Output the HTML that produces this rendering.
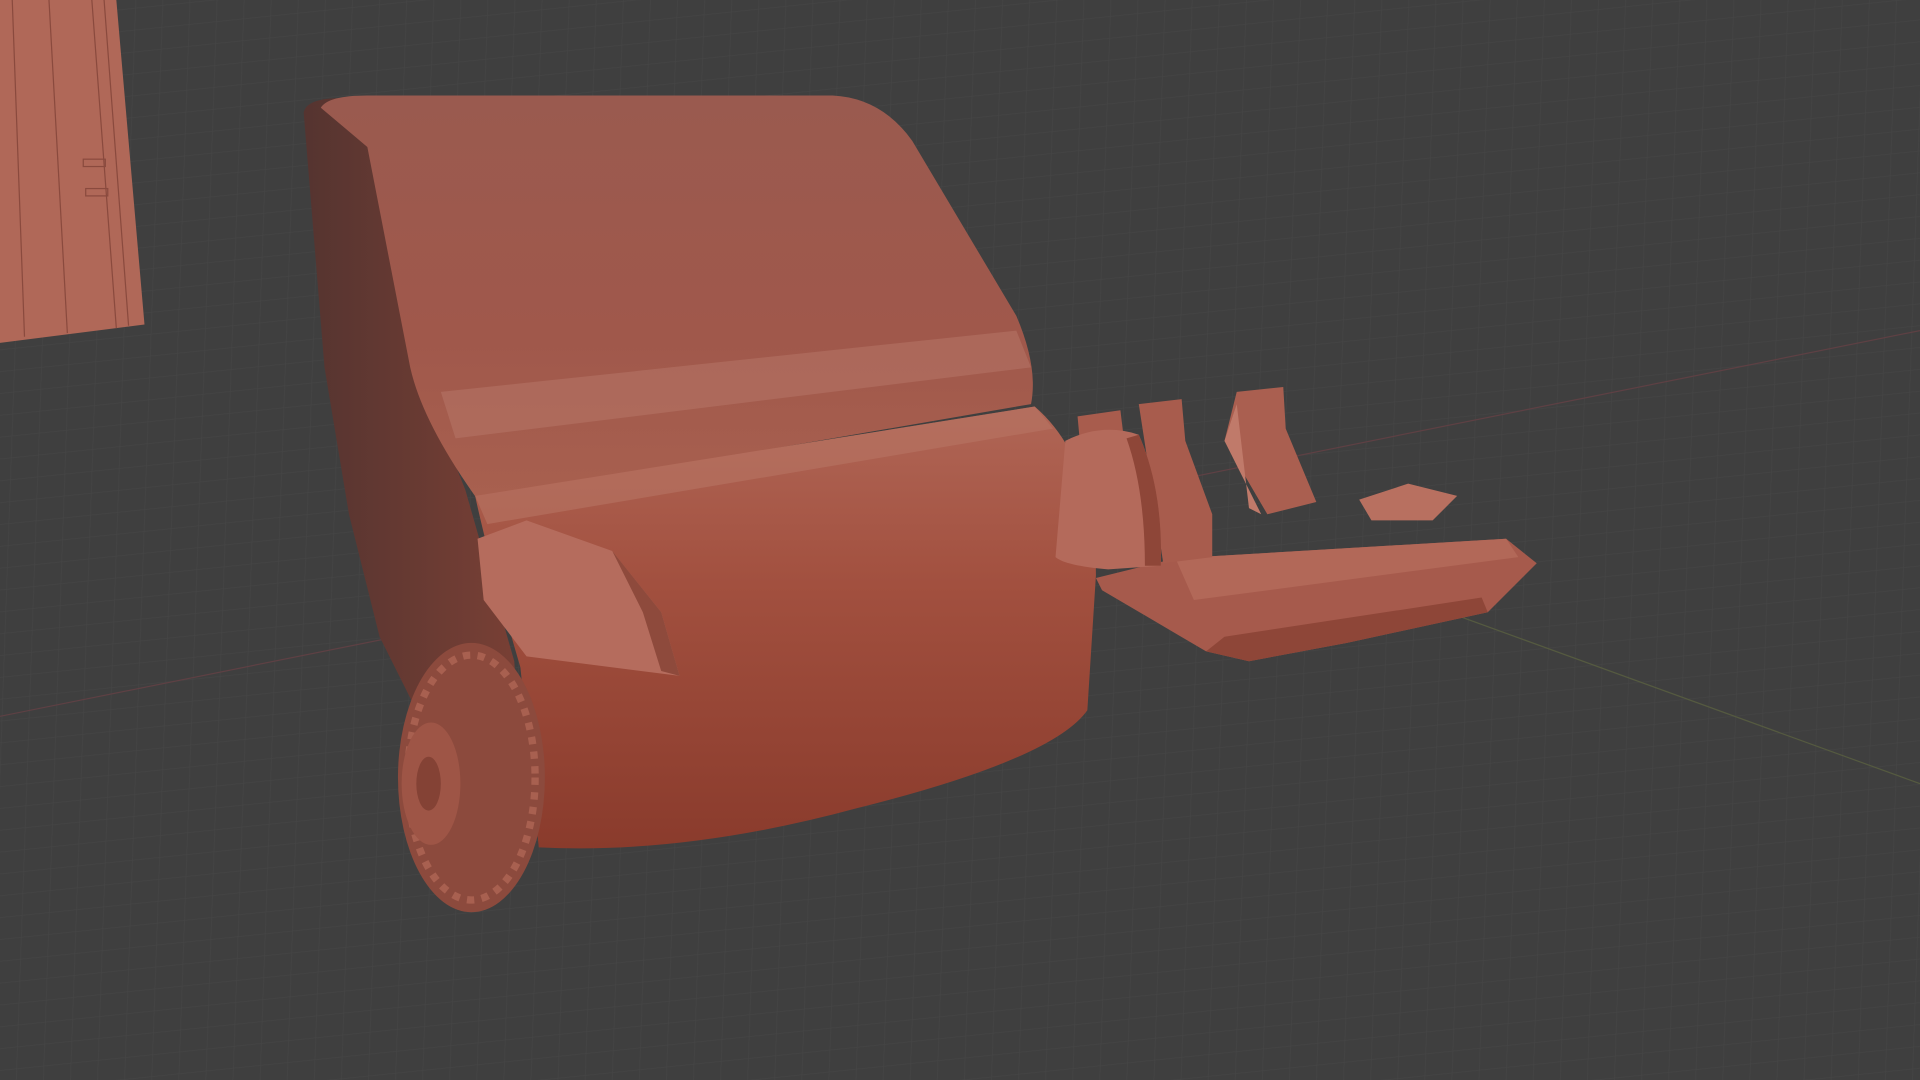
<!DOCTYPE html>
<html><head><meta charset="utf-8"><style>
html,body{margin:0;padding:0;width:1920px;height:1080px;overflow:hidden;background:#3f3f3f}
svg{display:block}
</style></head><body>
<svg width="1920" height="1080" viewBox="0 0 1568 882" preserveAspectRatio="none" xmlns="http://www.w3.org/2000/svg">
<defs>
<pattern id="g" width="22" height="18" patternUnits="userSpaceOnUse" patternTransform="skewX(-8) rotate(-6)">
<path d="M22 0H0V18" fill="none" stroke="#454545" stroke-width="1"/>
</pattern>
<linearGradient id="top" x1="0" y1="0" x2="0" y2="1">
<stop offset="0" stop-color="#9a5a4f"/><stop offset="0.6" stop-color="#a0584b"/><stop offset="1" stop-color="#a8604f"/>
</linearGradient>
<linearGradient id="low" x1="0" y1="0" x2="0" y2="1">
<stop offset="0" stop-color="#b06656"/><stop offset="0.4" stop-color="#a2503f"/><stop offset="1" stop-color="#8a3b2c"/>
</linearGradient>
<linearGradient id="side" x1="0" y1="0" x2="1" y2="0">
<stop offset="0" stop-color="#553430"/><stop offset="1" stop-color="#7a4035"/>
</linearGradient>
</defs>
<rect width="1568" height="882" fill="#3f3f3f"/>
<rect width="1568" height="882" fill="url(#g)"/>
<line x1="0" y1="585" x2="1568" y2="270" stroke="#5e4044" stroke-width="1"/>
<line x1="1100" y1="470" x2="1568" y2="640" stroke="#555a40" stroke-width="1"/>
<!-- door panel -->
<polygon points="0,0 95,0 118,265 0,280" fill="#b06858"/>
<g stroke="#8a4a3e" stroke-width="1" fill="none">
<line x1="10" y1="0" x2="20" y2="275"/><line x1="40" y1="0" x2="55" y2="272"/><line x1="75" y1="0" x2="95" y2="268"/><line x1="85" y1="0" x2="105" y2="266"/>
<rect x="68" y="130" width="18" height="6"/><rect x="70" y="154" width="18" height="6"/>
</g>
<!-- side -->
<path d="M248,92 Q250,80 280,80 L300,82 L340,300 L380,400 L420,540 L430,690 L360,620 L310,520 L285,420 L265,300 Z" fill="url(#side)"/>
<!-- top panel -->
<path d="M262,88 Q268,78 300,78 L680,78 Q720,80 745,115 L830,258 Q848,300 842,330 L390,408 Q345,345 335,300 L300,120 Z" fill="url(#top)"/>
<path d="M360,320 L830,270 L842,300 L372,358 Z" fill="#b8786a" opacity="0.5"/>
<!-- lower front -->
<path d="M388,405 L845,332 Q895,375 895,470 L888,580 Q860,620 700,660 Q560,698 440,692 L425,545 Q400,460 388,405Z" fill="url(#low)"/>
<path d="M388,405 L845,332 L860,350 L398,428 Z" fill="#b87464" opacity="0.6"/>
<!-- wheel -->
<ellipse cx="385" cy="635" rx="60" ry="110" fill="#8c4a3d"/>
<ellipse cx="385" cy="635" rx="52" ry="100" fill="none" stroke="#a86050" stroke-width="6" stroke-dasharray="6 6"/>
<ellipse cx="352" cy="640" rx="24" ry="50" fill="#9e5546"/>
<ellipse cx="350" cy="640" rx="10" ry="22" fill="#844235"/>
<!-- headlight -->
<polygon points="390,440 430,425 500,450 540,500 555,552 430,536 395,490" fill="#b56c5d"/>
<polygon points="500,450 540,500 555,552 540,548 525,500" fill="#8e4a3c"/>
<!-- tray -->
<polygon points="895,472 960,456 1230,440 1255,460 1215,500 1100,525 1020,540 985,532 900,482" fill="#a65a4c"/>
<polygon points="960,456 1230,440 1240,455 975,490" fill="#b26858"/>
<polygon points="985,532 1020,540 1100,525 1215,500 1210,488 1000,520" fill="#8e4638"/>
<!-- seats -->
<path d="M880,340 L915,335 L918,360 L882,362Z" fill="#a85c4d"/>
<path d="M930,330 L965,326 L968,360 L990,420 L990,455 L950,460 Z" fill="#a85c4d"/>
<path d="M1010,320 L1048,316 L1050,350 L1075,410 L1035,420 L1000,360 Z" fill="#aa5f50"/>
<path d="M1000,360 L1010,330 L1020,415 L1030,420 Z" fill="#c07a6a"/>
<path d="M870,360 Q900,345 930,355 Q950,400 948,462 L905,465 Q870,462 862,455 Z" fill="#b46a5b"/>
<path d="M930,355 Q950,400 948,462 L935,462 Q935,400 920,358Z" fill="#8e4638"/>
<path d="M1110,408 L1150,395 L1190,405 L1170,425 L1120,425Z" fill="#b87060"/>
</svg>
</body></html>
